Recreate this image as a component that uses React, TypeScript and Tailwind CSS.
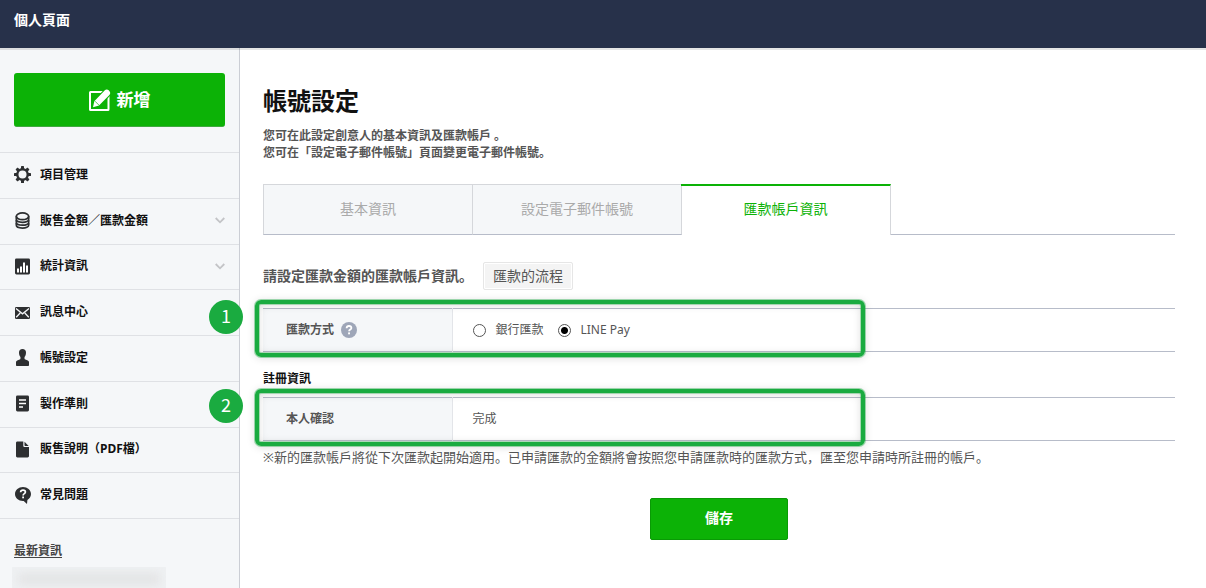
import type { ReactNode } from 'react';

const INK = '#2d2f31';

const icons: Record<string, ReactNode> = {
  gear: (
    <svg width="17" height="17" viewBox="0 0 17 17" aria-hidden="true">
      <g fill={INK}>
        <rect x="7" y="0" width="3" height="17" rx="0.6" />
        <rect x="7" y="0" width="3" height="17" rx="0.6" transform="rotate(45 8.5 8.5)" />
        <rect x="7" y="0" width="3" height="17" rx="0.6" transform="rotate(90 8.5 8.5)" />
        <rect x="7" y="0" width="3" height="17" rx="0.6" transform="rotate(135 8.5 8.5)" />
        <circle cx="8.5" cy="8.5" r="6.4" />
      </g>
      <circle cx="8.5" cy="8.5" r="4" fill="#f5f7f9" />
    </svg>
  ),
  coins: (
    <svg width="17" height="17" viewBox="0 0 17 17" fill="none" stroke={INK} strokeWidth="1.7" aria-hidden="true">
      <ellipse cx="8.5" cy="4.300" rx="6.200" ry="3.400" />
      <path d="M2.300 4.300v3c0 1.800 2.700 3 6.200 3s6.200-1.200 6.200-3v-3" />
      <path d="M2.300 8v2.200c0 1.800 2.700 3 6.200 3s6.200-1.200 6.200-3V8" />
      <path d="M2.300 11v2.100c0 1.800 2.700 3 6.200 3s6.200-1.200 6.200-3V11" />
    </svg>
  ),
  chart: (
    <svg width="17" height="17" viewBox="0 0 17 17" aria-hidden="true">
      <rect x="1" y="0.5" width="15" height="16" rx="1.4" fill={INK} />
      <path fill="#fff" d="M3 10.5h2v4H3zM6 8.5h2v6H6zM9 4.5h2v10H9zM12 7.5h2v7h-2z" />
    </svg>
  ),
  mail: (
    <svg width="17" height="17" viewBox="0 0 17 17" aria-hidden="true">
      <rect x="1" y="3" width="15" height="12" rx="1.2" fill={INK} />
      <path d="M2 4.400l6.500 5.400L15 4.400M2.200 13.200l4-4.200M14.800 13.200l-4-4.200" fill="none" stroke="#f5f7f9" strokeWidth="1.300" />
    </svg>
  ),
  person: (
    <svg width="17" height="17" viewBox="0 0 17 17" aria-hidden="true">
      <path
        fill={INK}
        d="M8.5 0C10.7 0 12 1.400 12 3.500c0 1.700-.5 3.300-1.300 4.200-.3.400-.3 2.300.1 2.500l3 1.200c.8.300 1.200.9 1.200 1.700V16c0 .6-.4 1-1 1H3c-.6 0-1-.4-1-1v-2.900c0-.8.4-1.400 1.200-1.700l3-1.200c.4-.2.4-2.100.1-2.500C5.500 6.800 5 5.200 5 3.500 5 1.400 6.300 0 8.500 0z"
      />
    </svg>
  ),
  guide: (
    <svg width="17" height="17" viewBox="0 0 17 17" aria-hidden="true">
      <rect x="2" y="0.5" width="13" height="16" rx="1.4" fill={INK} />
      <path d="M5 5h7M5 8.500h7M5 12h4" stroke="#fff" strokeWidth="1.6" />
    </svg>
  ),
  file: (
    <svg width="17" height="17" viewBox="0 0 17 17" aria-hidden="true">
      <path fill={INK} d="M3.400.5H9.300v4.200c0 .8.5 1.300 1.300 1.300H15v9.100c0 .8-.6 1.400-1.400 1.400H3.400C2.600 16.500 2 15.900 2 15.100V1.900C2 1.100 2.600.5 3.400.5z" />
      <path fill={INK} d="M10.500.8 14.700 4.900H11.200c-.4 0-.7-.3-.7-.7z" />
    </svg>
  ),
  question: (
    <svg width="17" height="17" viewBox="0 0 17 17" aria-hidden="true">
      <path fill={INK} d="M9 0c4.400 0 8 3 8 7 0 2.500-1.400 4.600-3.600 5.900L13 17l-3.300-3H9c-4.400 0-8-3-8-7s3.600-7 8-7z" />
      <path d="M6.600 5.200c.1-1.300 1.100-2 2.400-2s2.400.7 2.400 1.900c0 1.600-2.300 1.500-2.300 3.300" fill="none" stroke="#fff" strokeWidth="1.700" />
      <rect x="8.200" y="9.500" width="1.800" height="1.800" fill="#fff" />
    </svg>
  ),
};

const menu = [
  { icon: 'gear', label: '項目管理' },
  { icon: 'coins', label: '販售金額／匯款金額', expandable: true },
  { icon: 'chart', label: '統計資訊', expandable: true },
  { icon: 'mail', label: '訊息中心' },
  { icon: 'person', label: '帳號設定' },
  { icon: 'guide', label: '製作準則' },
  { icon: 'file', label: '販售說明（PDF檔）' },
  { icon: 'question', label: '常見問題' },
];

function Sidebar() {
  return (
    <aside className="w-60 shrink-0 border-r border-[#cbced5] bg-[#f5f7f9] pt-[25px]">
      <div className="px-3.5">
        <button
          type="button"
          className="flex h-[54px] w-full items-center justify-center gap-1.5 rounded-[3px] border-b border-[#3fa93f] bg-[#0cb206] text-[17px] leading-6 font-bold text-white"
        >
          <svg width="22" height="22" viewBox="0 0 22 22" aria-hidden="true">
            <rect x="1" y="3" width="18.500" height="18" rx="0.500" fill="none" stroke="#fff" strokeWidth="2" />
            <path
              d="M4 18.200l1.300-6L15.600 1.500c1.200-1.200 2.900-1.300 4.100-.2l.6.600c1.200 1.100 1.200 2.900.1 4.100L10 16.600z"
              fill="#fff"
              stroke="#0cb206"
              strokeWidth="2"
              paintOrder="stroke"
            />
            <path d="M6 12.200l4.200 4.200" stroke="#0cb206" strokeWidth="0.700" />
          </svg>
          新增
        </button>
      </div>
      <nav className="mt-[25px] border-t border-[#dfe1e5]">
        <ul className="grid h-[366px] auto-rows-fr">
          {menu.map((item) => (
            <li key={item.label} className="border-b border-[#dfe1e5]">
              <a href="#" className="flex h-full items-center gap-[9px] px-3.5 pb-px text-xs font-bold text-[#111]">
                {icons[item.icon]}
                <span className="flex-1 whitespace-nowrap">{item.label}</span>
                {item.expandable && (
                  <svg width="10" height="7" viewBox="0 0 10 7" aria-hidden="true">
                    <path d="M0.700 1l4.300 4.300L9.300 1" fill="none" stroke="#c3c4c7" strokeWidth="1.800" />
                  </svg>
                )}
              </a>
            </li>
          ))}
        </ul>
      </nav>
      <div className="px-3 pt-6">
        <a href="#" className="ml-0.5 block w-fit text-xs font-bold text-[#444] underline underline-offset-2">
          最新資訊
        </a>
        <div className="mt-2 h-[21px] w-[154px] overflow-hidden bg-[#eff1f3] p-1.5">
          <div className="h-3 bg-[#e3e4e5] blur-[5px]" />
        </div>
      </div>
    </aside>
  );
}

const tabs = ['基本資訊', '設定電子郵件帳號', '匯款帳戶資訊'];

function Tabs() {
  return (
    <div role="tablist" className="flex h-[51px] text-sm">
      {tabs.map((label, i) => (
        <button
          key={label}
          type="button"
          role="tab"
          aria-selected={i === 2}
          className={
            i === 2
              ? '-ml-px w-[210px] border-t-2 border-r border-t-[#0cb206] border-r-[#d5d7db] pb-1 text-[#0cb206]'
              : i === 1
                ? '-ml-px w-[210px] border border-[#d5d7db] border-b-[#b7bcc9] bg-[#f5f7f9] pb-0.5 text-[#aaa]'
                : 'w-[210px] border border-[#d5d7db] border-b-[#b7bcc9] bg-[#f5f7f9] pb-0.5 text-[#aaa]'
          }
        >
          {label}
        </button>
      ))}
      <div className="flex-1 border-b border-[#b7bcc9]" />
    </div>
  );
}

function Callout({ step }: { step: number }) {
  return (
    <>
      <div className="pointer-events-none absolute -top-2 -left-2 h-[57px] w-[610px] rounded-md border-4 border-[#1aab40] shadow-[0_0_0_1px_#1aab4066,0_1px_8px_#00000026,inset_0_0_0_1px_#1aab4055,inset_0_1px_8px_#00000026]" />
      <div className="absolute -top-2 -left-[54px] flex size-[34px] items-center justify-center rounded-full bg-[#1aab40] pb-1 font-['Noto_Sans_CJK_JP',sans-serif] text-lg leading-none text-white">
        {step}
      </div>
    </>
  );
}

function Row({ step, label, children }: { step: number; label: ReactNode; children: ReactNode }) {
  return (
    <div className="relative">
      <table className="w-full border-y border-[#b7bcc9] text-xs">
        <tbody>
          <tr className="h-[43px]">
            <th scope="row" className="w-[189px] border-r border-[#e3e5e9] bg-[#f5f7f9] pl-[23px] text-left font-bold text-[#555]">
              {label}
            </th>
            <td className="pl-5 text-[#555]">{children}</td>
          </tr>
        </tbody>
      </table>
      <Callout step={step} />
    </div>
  );
}

function Radio({ label, checked }: { label: string; checked?: boolean }) {
  return (
    <label className="flex items-center gap-2.5">
      <input
        type="radio"
        name="method"
        defaultChecked={checked}
        className="size-[13px] appearance-none rounded-full border border-[#555] bg-white checked:bg-[radial-gradient(circle,#000_3px,transparent_4px)]"
      />
      {label}
    </label>
  );
}

export default function App() {
  return (
    <div className="flex min-h-screen flex-col bg-white font-['Noto_Sans','Noto_Sans_CJK_JP',sans-serif]">
      <header className="relative h-12 bg-[#27314a] px-3.5 pt-2.5 text-sm font-bold text-white shadow-[0_2px_0_#0000001a]">
        個人頁面
      </header>
      <div className="flex flex-1">
        <Sidebar />
        <main className="min-w-0 flex-1 pt-[37px] pr-[31px] pl-[23px]">
          <h1 className="text-2xl font-bold text-[#111]">帳號設定</h1>
          <p className="mt-2.5 text-xs leading-[17px] font-bold text-[#555]">
            您可在此設定創意人的基本資訊及匯款帳戶 。
            <br />
            您可在「設定電子郵件帳號」頁面變更電子郵件帳號。
          </p>
          <div className="mt-[23px]">
            <Tabs />
          </div>
          <div className="mt-[27px] flex items-center gap-2.5 text-sm">
            <p className="font-bold text-[#555]">請設定匯款金額的匯款帳戶資訊。</p>
            <button
              type="button"
              className="h-7 rounded-[2px] border border-[#e6e6e6] bg-[#f4f4f4] px-[9px] text-[#555] shadow-[inset_0_0_0_1px_#fff]"
            >
              匯款的流程
            </button>
          </div>
          <div className="mt-[18px]">
            <Row
              step={1}
              label={
                <span className="flex items-center gap-[7px]">
                  匯款方式
                  <svg width="16" height="16" viewBox="0 0 16 16" role="img" aria-label="說明">
                    <circle cx="8" cy="8" r="8" fill="#9ea6b8" />
                    <path d="M5.600 6.200c.1-1.500 1.100-2.200 2.400-2.200s2.400.8 2.400 2c0 1.600-2.300 1.600-2.300 3.200" fill="none" stroke="#fff" strokeWidth="1.800" />
                    <rect x="7.100" y="10.400" width="1.900" height="1.900" fill="#fff" />
                  </svg>
                </span>
              }
            >
              <div className="flex gap-3.5">
                <Radio label="銀行匯款" />
                <Radio label="LINE Pay" checked />
              </div>
            </Row>
          </div>
          <h2 className="mt-[19px] mb-2.5 text-xs font-bold text-[#111]">註冊資訊</h2>
          <Row step={2} label="本人確認">
            完成
          </Row>
          <p className="mt-1.5 text-[13px] leading-5 text-[#555]">
            ※新的匯款帳戶將從下次匯款起開始適用。已申請匯款的金額將會按照您申請匯款時的匯款方式，匯至您申請時所註冊的帳戶。
          </p>
          <div className="mt-[31px] flex justify-center">
            <button
              type="button"
              className="h-[42px] w-[138px] rounded-[2px] border border-[#099a05] bg-[#0cb206] pb-0.5 text-sm font-bold text-white"
            >
              儲存
            </button>
          </div>
        </main>
      </div>
    </div>
  );
}
